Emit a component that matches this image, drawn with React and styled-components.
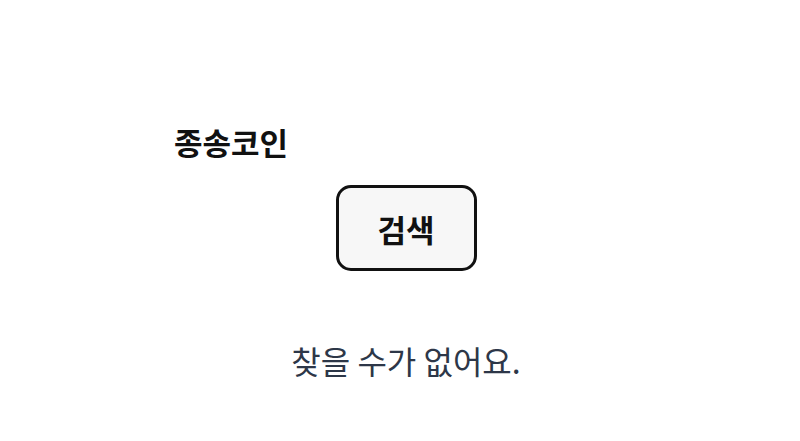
import React from 'react';
import styled, { createGlobalStyle } from 'styled-components';

const GlobalStyle = createGlobalStyle`
  html, body {
    margin: 0;
    padding: 0;
    background: #ffffff;
    font-family: 'Noto Sans CJK KR', 'Noto Sans', sans-serif;
  }
`;

const Page = styled.div`
  width: 800px;
  height: 441px;
  display: flex;
  flex-direction: column;
  padding-top: 122px;
  box-sizing: border-box;
`;

const Title = styled.h1`
  margin: 0 0 0 174px;
  font-size: 31px;
  font-weight: 700;
  line-height: 40px;
  color: #111;
`;

const Center = styled.div`
  display: flex;
  flex-direction: column;
  align-items: center;
  padding-left: 12px;
`;

const SearchButton = styled.button`
  margin-top: 23px;
  width: 141px;
  height: 86px;
  border: 3.5px solid #111;
  border-radius: 15px;
  background: #f7f7f7;
  font-family: inherit;
  font-size: 31px;
  font-weight: 700;
  color: #111;
  cursor: pointer;
`;

const Message = styled.p`
  margin: 69px 0 0;
  font-size: 32px;
  font-weight: 400;
  line-height: 40px;
  color: #2d3748;
`;

export default function App() {
  return (
    <>
      <GlobalStyle />
      <Page>
        <Title>종송코인</Title>
        <Center>
          <SearchButton>검색</SearchButton>
          <Message>찾을 수가 없어요.</Message>
        </Center>
      </Page>
    </>
  );
}
